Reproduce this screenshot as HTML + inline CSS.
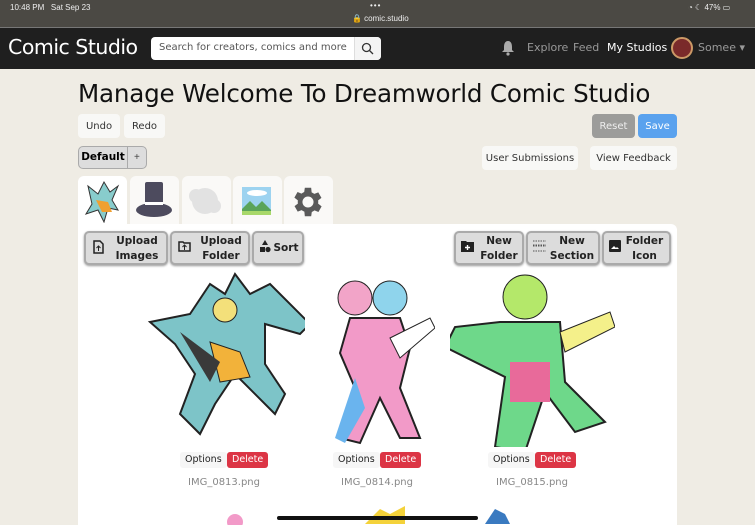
<!DOCTYPE html>
<html><head><style>
*{box-sizing:border-box;margin:0;padding:0}
body{width:755px;height:525px;overflow:hidden;background:#efece4;font-family:"Liberation Sans","DejaVu Sans",sans-serif;position:relative}
.abs{position:absolute}
.status{left:0;top:0;width:755px;height:27px;background:#4b4944;color:#eee;font-size:8px}
.nav{left:0;top:27px;width:755px;height:42px;background:#1f1f1f;border-top:1px solid #777}
.btn{position:absolute;border-radius:4px;font-size:10px;display:flex;align-items:center;justify-content:center;font-family:"DejaVu Sans",sans-serif}
.light{background:#f8f8f6;color:#333}
.tb{position:absolute;background:#dcdcdc;border:2px solid #aaa;border-radius:5px;font-family:"DejaVu Sans",sans-serif;font-weight:bold;font-size:10.5px;color:#222;text-align:center;line-height:15px;box-shadow:0 1px 2px #999}
.tab{position:absolute;top:176px;width:49px;height:48px;background:#faf9f7;border-radius:6px 6px 0 0}
.opt{position:absolute;font-size:9.5px;font-family:"DejaVu Sans",sans-serif;height:16px;line-height:16px;border-radius:3px;padding:0 5px}
.fn{position:absolute;font-size:10px;color:#888;font-family:"DejaVu Sans",sans-serif}
</style></head><body>
<div class="abs status">
<span class="abs" style="left:10px;top:3px">10:48 PM&nbsp;&nbsp; Sat Sep 23</span>
<span class="abs" style="left:370px;top:1px;letter-spacing:1px">•••</span>
<span class="abs" style="left:352px;top:14px">🔒 comic.studio</span>
<span class="abs" style="left:688px;top:3px">◔ ☾ 47% ▭</span>
</div>
<div class="abs nav">
<span class="abs" style="left:8px;top:7px;color:#fff;font-size:20.5px;font-family:'DejaVu Sans',sans-serif;letter-spacing:-0.5px">Comic Studio</span>
<div class="abs" style="left:151px;top:9px;width:230px;height:23px;background:#fff;border-radius:4px"></div>
<span class="abs" style="left:159px;top:14px;font-size:10px;color:#555;font-family:'DejaVu Sans',sans-serif">Search for creators, comics and more</span>
<div class="abs" style="left:354px;top:9px;width:27px;height:23px;background:#f4f4f4;border-left:1px solid #ddd;border-radius:0 4px 4px 0"></div>
<svg class="abs" style="left:361px;top:14px" width="13" height="13"><circle cx="5.5" cy="5.5" r="4" fill="none" stroke="#333" stroke-width="1.3"/><line x1="8.5" y1="8.5" x2="12" y2="12" stroke="#333" stroke-width="1.3"/></svg>
<svg class="abs" style="left:501px;top:12px" width="14" height="16"><path d="M7 1C4 1 3 4 3 7v3L1 12h12l-2-2V7c0-3-1-6-4-6z" fill="#aaa"/><circle cx="7" cy="14" r="1.6" fill="#aaa"/></svg>
<span class="abs" style="left:527px;top:13px;color:#999;font-size:11px;font-family:'DejaVu Sans',sans-serif">Explore</span>
<span class="abs" style="left:573px;top:13px;color:#999;font-size:11px;font-family:'DejaVu Sans',sans-serif">Feed</span>
<span class="abs" style="left:607px;top:13px;color:#fff;font-size:11px;font-family:'DejaVu Sans',sans-serif">My Studios</span>
<div class="abs" style="left:671px;top:9px;width:22px;height:22px;border-radius:50%;background:#7a2a2a;border:2px solid #c96"></div>
<span class="abs" style="left:698px;top:13px;color:#999;font-size:11px;font-family:'DejaVu Sans',sans-serif">Somee ▾</span>
</div>
<div class="abs" style="left:78px;top:79px;font-size:24.6px;color:#111;font-family:'DejaVu Sans',sans-serif;letter-spacing:-0.2px">Manage Welcome To Dreamworld Comic Studio</div>
<div class="btn light" style="left:78px;top:114px;width:42px;height:24px">Undo</div>
<div class="btn light" style="left:124px;top:114px;width:41px;height:24px">Redo</div>
<div class="btn" style="left:592px;top:114px;width:43px;height:24px;background:#9c9c9a;color:#eee">Reset</div>
<div class="btn" style="left:638px;top:114px;width:39px;height:24px;background:#5aa2ee;color:#fff">Save</div>
<div class="abs" style="left:78px;top:146px;width:69px;height:23px;background:#ddd;border:1px solid #aaa;border-radius:5px"></div>
<div class="abs" style="left:79px;top:147px;width:49px;height:21px;border-right:1px solid #aaa;font-size:10.5px;font-weight:bold;line-height:21px;text-align:center;font-family:'DejaVu Sans',sans-serif">Default</div>
<div class="abs" style="left:134px;top:147px;font-size:10px;line-height:21px;color:#444">+</div>
<div class="btn light" style="left:482px;top:146px;width:96px;height:24px">User Submissions</div>
<div class="btn light" style="left:590px;top:146px;width:87px;height:24px">View Feedback</div>
<div class="tab" style="left:78px;background:#fff"></div>
<svg class="abs" style="left:80px;top:178px" width="45" height="45"><path d="M8 8l10 8 6-12 6 10 8-6-6 14 6 10-10-2-4 14-6-12-12 4 6-10z" fill="#8cc" stroke="#333"/><path d="M16 22l12 2 4 10-10 0z" fill="#f0a030"/></svg>
<div class="tab" style="left:130px"></div>
<svg class="abs" style="left:134px;top:180px" width="40" height="40"><rect x="11" y="2" width="18" height="24" rx="2" fill="#4d4b5e"/><ellipse cx="20" cy="30" rx="18" ry="7" fill="#4d4b5e"/><rect x="11" y="22" width="18" height="3" fill="#fff"/></svg>
<div class="tab" style="left:182px"></div>
<svg class="abs" style="left:186px;top:182px" width="38" height="38"><circle cx="19" cy="19" r="13" fill="#e2e2e2"/><circle cx="10" cy="14" r="7" fill="#e2e2e2"/><circle cx="28" cy="24" r="7" fill="#e2e2e2"/></svg>
<div class="tab" style="left:233px"></div>
<svg class="abs" style="left:242px;top:187px" width="29" height="28"><rect width="29" height="28" fill="#9dd3f0"/><path d="M0 22l8-8 6 6 6-6 9 9v5H0z" fill="#5aa45a"/><path d="M0 24h29v4H0z" fill="#a8d86a"/><ellipse cx="15" cy="6" rx="10" ry="3" fill="#fff"/></svg>
<div class="tab" style="left:284px"></div>
<svg class="abs" style="left:289px;top:183px" width="38" height="38" viewBox="0 0 24 24"><path fill="#5a5a5a" d="M19.4 13a7.5 7.5 0 000-2l2.1-1.6-2-3.5-2.5 1a7 7 0 00-1.7-1L15 3h-4l-.4 2.7a7 7 0 00-1.7 1l-2.5-1-2 3.5L6.6 11a7.5 7.5 0 000 2l-2.1 1.6 2 3.5 2.5-1a7 7 0 001.7 1L11 21h4l.4-2.7a7 7 0 001.7-1l2.5 1 2-3.5zM13 15.5a3.5 3.5 0 110-7 3.5 3.5 0 010 7z" transform="translate(-1 0)"/></svg>
<div class="abs" style="left:78px;top:224px;width:599px;height:301px;background:#fff;border-radius:0 6px 0 0"></div>
<div class="tb" style="left:84px;top:231px;width:84px;height:34px;padding:1px 0 0 22px">Upload<br>Images</div>
<svg class="abs" style="left:93px;top:240px" width="11" height="14"><path d="M1 1h6l3 3v9H1z" fill="none" stroke="#222" stroke-width="1.5"/><path d="M5.5 6v5M3.5 8l2-2 2 2" stroke="#222" fill="none"/></svg>
<div class="tb" style="left:170px;top:231px;width:80px;height:34px;padding:1px 0 0 22px">Upload<br>Folder</div>
<svg class="abs" style="left:178px;top:241px" width="13" height="11"><path d="M1 1h4l1 1h6v8H1z" fill="none" stroke="#222" stroke-width="1.5"/><path d="M6.5 4v5M4.5 6l2-2 2 2" stroke="#222" fill="none"/></svg>
<div class="tb" style="left:252px;top:231px;width:52px;height:34px;line-height:30px;padding-left:16px">Sort</div>
<svg class="abs" style="left:259px;top:240px" width="12" height="13"><path d="M6 0l3 5H3z" fill="#222"/><rect x="1" y="7" width="5" height="5" fill="#222"/><circle cx="9" cy="9.5" r="2.6" fill="#222"/></svg>
<div class="tb" style="left:454px;top:231px;width:70px;height:34px;padding:1px 0 0 20px">New<br>Folder</div>
<svg class="abs" style="left:461px;top:241px" width="13" height="11"><path d="M0 0h5l1 1h7v10H0z" fill="#222"/><path d="M6.5 4v5M4 6.5h5" stroke="#fff" stroke-width="1.4"/></svg>
<div class="tb" style="left:526px;top:231px;width:74px;height:34px;padding:1px 0 0 18px">New<br>Section</div>
<svg class="abs" style="left:533px;top:240px" width="13" height="12"><path d="M0 1h13M0 5h13M0 6h13M0 11h13" stroke="#555" stroke-dasharray="1.5 1"/></svg>
<div class="tb" style="left:602px;top:231px;width:69px;height:34px;padding:1px 0 0 16px">Folder<br>Icon</div>
<svg class="abs" style="left:609px;top:240px" width="12" height="12"><rect width="12" height="12" rx="1" fill="#222"/><path d="M2 9l3-3 2 2 1-1 2 2z" fill="#fff"/></svg>
<svg class="abs" style="left:140px;top:272px" width="165" height="175"><path d="M10 50l40-8 20-30 15 10 10-20 15 20 20-10 40 40-10 10-35-10 0 40 20 30-10 20-40-40-20 30-15 30-20-20 15-40-20-30z" fill="#7dc4c8" stroke="#222" stroke-width="2"/><path d="M70 70l30 10 10 25-30 5z" fill="#f2b23a" stroke="#222"/><path d="M40 60l40 30-10 20z" fill="#3a3a3a"/><circle cx="85" cy="38" r="12" fill="#f3e07a" stroke="#222"/></svg>
<svg class="abs" style="left:320px;top:278px" width="115" height="170"><circle cx="35" cy="20" r="17" fill="#f2a4c8" stroke="#222"/><circle cx="70" cy="20" r="17" fill="#8fd4ec" stroke="#222"/><path d="M30 40h50l10 30-10 40 20 50-20 0-20-40-20 45-20-5 15-50-15-35z" fill="#f29ac8" stroke="#222" stroke-width="2"/><path d="M35 100l10 30-20 35-10-5z" fill="#6ab4ee"/><path d="M70 60l40-20 5 10-35 30z" fill="#fff" stroke="#222"/></svg>
<svg class="abs" style="left:450px;top:272px" width="165" height="175"><circle cx="75" cy="25" r="22" fill="#b4e86a" stroke="#222"/><path d="M50 50l60 0 5 60 40 40-30 10-30-40-20 60-30-5 10-70-60-30 10-20z" fill="#6ed88a" stroke="#222" stroke-width="2"/><path d="M110 60l50-20 5 15-50 25z" fill="#f4f08a" stroke="#222"/><path d="M60 90l40 0 0 40-40 0z" fill="#e86a9a"/></svg>
<div class="opt" style="left:180px;top:452px;background:#f6f6f6;color:#222">Options</div>
<div class="opt" style="left:227px;top:452px;background:#dc3545;color:#fff">Delete</div>
<div class="opt" style="left:333px;top:452px;background:#f6f6f6;color:#222">Options</div>
<div class="opt" style="left:380px;top:452px;background:#dc3545;color:#fff">Delete</div>
<div class="opt" style="left:488px;top:452px;background:#f6f6f6;color:#222">Options</div>
<div class="opt" style="left:535px;top:452px;background:#dc3545;color:#fff">Delete</div>
<div class="fn" style="left:188px;top:477px">IMG_0813.png</div>
<div class="fn" style="left:341px;top:477px">IMG_0814.png</div>
<div class="fn" style="left:496px;top:477px">IMG_0815.png</div>
<svg class="abs" style="left:215px;top:504px" width="310" height="21"><circle cx="20" cy="18" r="8" fill="#f29ac8"/><path d="M150 20l15-15 10 5 15-8 0 18z" fill="#f4d23a"/><path d="M270 20l10-15 10 5 5 10z" fill="#3a7ac0"/></svg>
<div class="abs" style="left:277px;top:516px;width:201px;height:4px;background:#111;border-radius:2px"></div>
</body></html>
